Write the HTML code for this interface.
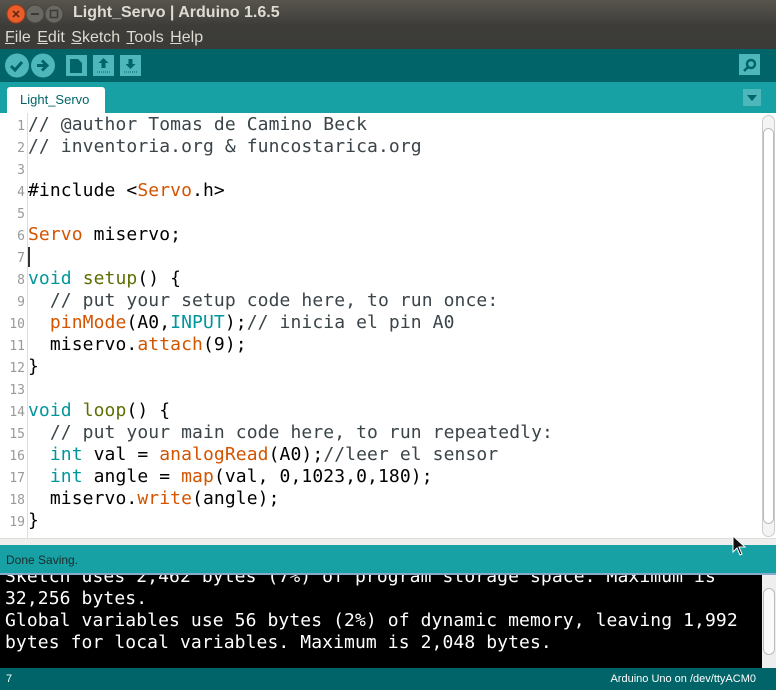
<!DOCTYPE html>
<html><head><meta charset="utf-8"><style>
*{margin:0;padding:0;box-sizing:border-box}
body{width:776px;height:690px;overflow:hidden;background:#fff;font-family:"Liberation Sans","DejaVu Sans",sans-serif;position:relative}
.abs{position:absolute}
#top{left:0;top:0;width:776px;height:49px;background:linear-gradient(#57544c 0,#4a4843 14px,#3d3c38 26px,#3c3b37 49px)}
.title{left:73px;top:4px;color:#dfdbd2;font-weight:bold;font-size:16px}
.menu{left:5px;top:29px;color:#dfdbd2;font-size:16px}
.menu span{margin-right:2px;}
.menu u{text-decoration:underline}
#tb{left:0;top:49px;width:776px;height:33px;background:#006468}
#tabs{left:0;top:82px;width:776px;height:31px;background:#17a1a5}
#ed{left:0;top:113px;width:776px;height:425px;background:#fff}
.code{left:28px;top:114px;font-family:"DejaVu Sans Mono","Liberation Mono",monospace;font-size:18px;line-height:22px;letter-spacing:0.1px;white-space:pre;color:#000}
.gut{left:0;top:114px;width:25px;text-align:right;font-family:"DejaVu Sans Mono",monospace;font-size:13px;line-height:22px;color:#999;white-space:pre;padding-top:2px}
.c{color:#3a4449}.k{color:#00979c}.f{color:#d35400}.g{color:#5e6d03}
#div{left:0;top:538px;width:776px;height:7px;background:#eeeeec;border-top:1px solid #ddd}
#st{left:0;top:545px;width:776px;height:30px;background:#17a1a5;border-bottom:2px solid #8ac}
#con{left:0;top:575px;width:776px;height:93px;background:#000;overflow:hidden}
.ct{left:5px;top:-9px;font-family:"DejaVu Sans Mono","Liberation Mono",monospace;font-size:18px;line-height:22px;letter-spacing:0.1px;color:#fff;white-space:pre}
#bot{left:0;top:668px;width:776px;height:22px;background:#006468;color:#fff;font-size:11px}
</style></head><body>
<div id="top" class="abs"></div>
<svg class="abs" style="left:0;top:0" width="70" height="28">
<circle cx="16" cy="14" r="9" fill="#e95d2b" stroke="#a53b16"/>
<path d="M13 11l6 6M19 11l-6 6" stroke="#5a2310" stroke-width="1.5"/>
<circle cx="35" cy="14" r="9" fill="#6a6862" stroke="#45443f"/>
<path d="M31 14h8" stroke="#3c3b37" stroke-width="2"/>
<circle cx="54" cy="14" r="9" fill="#6a6862" stroke="#45443f"/>
<rect x="50.5" y="10.5" width="7" height="7" fill="none" stroke="#3c3b37" stroke-width="1.5"/>
</svg>
<div class="abs title">Light_Servo | Arduino 1.6.5</div>
<div class="abs menu"><span><u>F</u>ile</span> <span><u>E</u>dit</span> <span><u>S</u>ketch</span> <span><u>T</u>ools</span> <span><u>H</u>elp</span></div>
<div id="tb" class="abs"></div>
<svg class="abs" style="left:0;top:49px" width="776" height="33">
<circle cx="17" cy="16.5" r="12" fill="#4db7bb"/>
<path d="M11 17l4 4 7-8" stroke="#006468" stroke-width="3" fill="none"/>
<circle cx="43" cy="16.5" r="12" fill="#4db7bb"/>
<path d="M37 16.5h8M42 11.5l5 5-5 5" stroke="#006468" stroke-width="3" fill="none"/>
<rect x="66" y="6" width="21" height="21" fill="#4db7bb"/>
<path d="M70 10h8l4 4v10h-12z" fill="#006468"/>
<rect x="93" y="6" width="21" height="21" fill="#4db7bb"/>
<path d="M103.5 9l-5 5h3v5h4v-5h3z" fill="#006468"/><path d="M97 23h13" stroke="#006468" stroke-dasharray="1 1"/>
<rect x="120" y="6" width="21" height="21" fill="#4db7bb"/>
<path d="M130.5 20l-5-5h3v-5h4v5h3z" fill="#006468"/><path d="M124 23h13" stroke="#006468" stroke-dasharray="1 1"/>
<rect x="739" y="5" width="21" height="21" fill="#4db7bb"/>
<circle cx="751" cy="15" r="4" fill="none" stroke="#006468" stroke-width="2.5"/><path d="M748 18l-4 4" stroke="#006468" stroke-width="2.5"/>
</svg>
<div id="tabs" class="abs"></div>
<div class="abs" style="left:7px;top:87px;width:98px;height:26px;background:#fff;border-radius:3px 3px 0 0;color:#006468;font-size:13px;padding:5px 0 0 13px">Light_Servo</div>
<div class="abs" style="left:743px;top:89px;width:18px;height:17px;background:#4db7bb"></div>
<svg class="abs" style="left:743px;top:89px" width="18" height="17"><path d="M4 6h10l-5 6z" fill="#006468"/></svg>
<div id="ed" class="abs"></div>
<div class="abs" style="left:27px;top:113px;width:1px;height:425px;background:#ddd"></div>
<div class="abs" style="left:762px;top:115px;width:13px;height:422px;border:1px solid #ccc;border-radius:7px;background:#f4f4f4"></div>
<div class="abs" style="left:763px;top:128px;width:11px;height:396px;border:1px solid #bbb;border-radius:6px;background:#fff"></div>
<div class="abs" style="left:28px;top:247px;width:2px;height:20px;background:#333"></div>
<div class="abs gut">1
2
3
4
5
6
7
8
9
10
11
12
13
14
15
16
17
18
19</div>
<div class="abs code"><span class="c">// @author Tomas de Camino Beck</span>
<span class="c">// inventoria.org &amp; funcostarica.org</span>

#include &lt;<span class="f">Servo</span>.h&gt;

<span class="f">Servo</span> miservo;

<span class="k">void</span> <span class="g">setup</span>() {
  <span class="c">// put your setup code here, to run once:</span>
  <span class="f">pinMode</span>(A0,<span class="k">INPUT</span>);<span class="c">// inicia el pin A0</span>
  miservo.<span class="f">attach</span>(9);
}

<span class="k">void</span> <span class="g">loop</span>() {
  <span class="c">// put your main code here, to run repeatedly:</span>
  <span class="k">int</span> val = <span class="f">analogRead</span>(A0);<span class="c">//leer el sensor</span>
  <span class="k">int</span> angle = <span class="f">map</span>(val, 0,1023,0,180);
  miservo.<span class="f">write</span>(angle);
}</div>
<div id="div" class="abs"></div>
<div id="st" class="abs"><div style="position:absolute;left:6px;top:8px;font-size:12px;color:#1a2a2a">Done Saving.</div></div>
<svg class="abs" style="left:732px;top:535px" width="14" height="22"><path d="M1 1v16l4-4 3 7 2-1-3-7h6z" fill="#111" stroke="#fff"/></svg>
<div id="con" class="abs"><div class="abs ct">Sketch uses 2,462 bytes (7%) of program storage space. Maximum is
32,256 bytes.
Global variables use 56 bytes (2%) of dynamic memory, leaving 1,992
bytes for local variables. Maximum is 2,048 bytes.</div>
<div class="abs" style="left:762px;top:0;width:14px;height:93px;background:#eee"></div>
<div class="abs" style="left:763px;top:13px;width:12px;height:67px;border:1px solid #bbb;border-radius:6px;background:#fafafa"></div></div>
<div id="bot" class="abs"><span style="position:absolute;left:6px;top:5px">7</span><span style="position:absolute;right:20px;top:5px">Arduino Uno on /dev/ttyACM0</span></div>
</body></html>
